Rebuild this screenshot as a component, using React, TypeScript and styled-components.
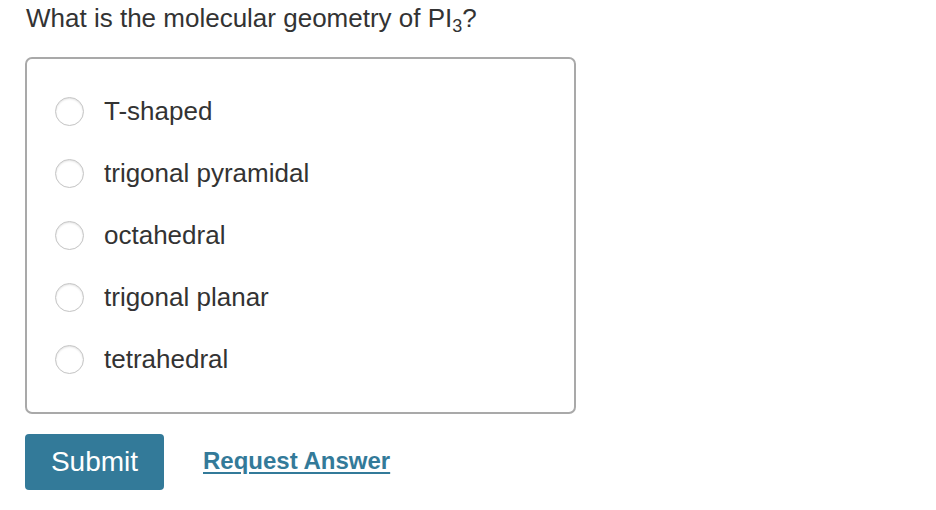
import React, { useState } from 'react';
import styled, { createGlobalStyle } from 'styled-components';

const GlobalStyle = createGlobalStyle`
  body {
    margin: 0;
    background: #ffffff;
    font-family: "Liberation Sans", Arial, sans-serif;
    color: #333333;
  }
`;

const Page = styled.div`
  padding: 3px 0 0 26px;
  width: 550px;
`;

const Question = styled.h1`
  margin: 0;
  font-size: 26px;
  font-weight: normal;
  line-height: 30px;
  color: #333333;

  sub {
    font-size: 18px;
    vertical-align: -5px;
    line-height: 0;
  }
`;

const Choices = styled.div`
  margin-top: 24px;
  margin-left: -1px;
  border: 2px solid #a9a9a9;
  border-radius: 7px;
  padding: 35px 0 36px 28px;
  display: flex;
  flex-direction: column;
  gap: 28px;
`;

const Choice = styled.label`
  display: flex;
  align-items: center;
  gap: 20px;
  height: 34px;
  font-size: 26px;
  cursor: pointer;
`;

const Radio = styled.span<{ $checked: boolean }>`
  flex: none;
  box-sizing: border-box;
  width: 29px;
  height: 29px;
  border-radius: 50%;
  border: 1px solid #c4c4c4;
  background: #ffffff;
  box-shadow: inset 0 1px 2px rgba(0, 0, 0, 0.12);
  display: flex;
  align-items: center;
  justify-content: center;

  &::after {
    content: '';
    width: 13px;
    height: 13px;
    border-radius: 50%;
    background: ${(p) => (p.$checked ? '#337a99' : 'transparent')};
  }
`;

const Actions = styled.div`
  margin-top: 20px;
  margin-left: -1px;
  display: flex;
  align-items: center;
  gap: 39px;
`;

const SubmitButton = styled.button`
  width: 139px;
  height: 56px;
  border: none;
  border-radius: 4px;
  background: #337a99;
  color: #ffffff;
  font-family: "Liberation Sans", Arial, sans-serif;
  font-size: 28px;
  cursor: pointer;
`;

const RequestLink = styled.a`
  margin-bottom: 3px;
  font-size: 24px;
  font-weight: bold;
  color: #337a99;
  text-decoration: underline;
  text-underline-offset: 3px;
  cursor: pointer;
`;

const options = ['T-shaped', 'trigonal pyramidal', 'octahedral', 'trigonal planar', 'tetrahedral'];

export default function App() {
  const [selected, setSelected] = useState<number | null>(null);

  return (
    <>
      <GlobalStyle />
      <Page>
        <Question>
          What is the molecular geometry of PI<sub>3</sub>?
        </Question>
        <Choices>
          {options.map((option, index) => (
            <Choice key={option} onClick={() => setSelected(index)}>
              <Radio $checked={selected === index} />
              {option}
            </Choice>
          ))}
        </Choices>
        <Actions>
          <SubmitButton type="button">Submit</SubmitButton>
          <RequestLink>Request Answer</RequestLink>
        </Actions>
      </Page>
    </>
  );
}
